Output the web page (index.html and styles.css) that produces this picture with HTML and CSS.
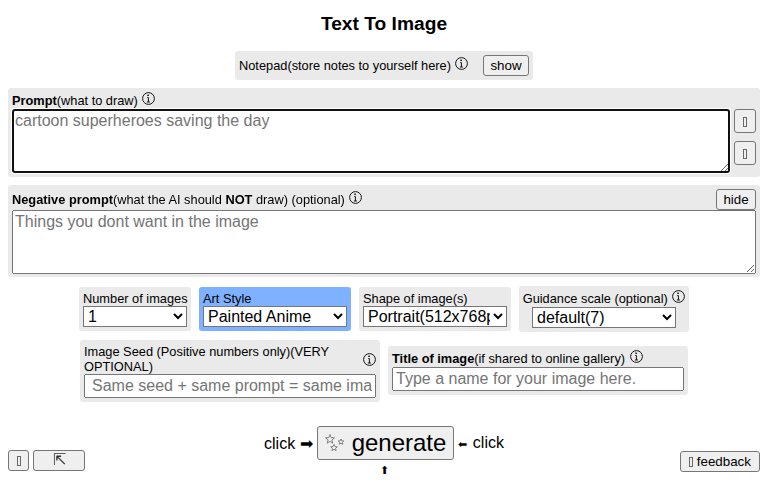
FILE: index.html
```html
<!DOCTYPE html>
<html>

<head>
  <title>Text To Image</title>
  <link rel="stylesheet" href="styles.css">
</head>

<body>
  <svg class="icon-defs" width="0" height="0">
    <symbol id="info" viewBox="0 0 13 13">
      <circle cx="6.5" cy="6.5" r="5.9" fill="none" stroke="#111" stroke-width="1" />
      <rect x="5.3" y="2.6" width="1.6" height="1.4" fill="#111" />
      <path d="M5 5.3h1.9v4.3h1v0.8h-3v-0.8h1v-3.5h-0.9z" fill="#111" />
    </symbol>
  </svg>

  <h1 class="title">Text To Image</h1>

  <div class="notepad-row">
    <div class="panel notepad">
      <span>Notepad(store notes to yourself here)</span>
      <svg class="info"><use href="#info" /></svg>
      <button class="btn show-btn">show</button>
    </div>
  </div>

  <div class="panel prompt">
    <div class="prompt-main">
      <label class="field-label with-info"><b>Prompt</b>(what to draw) <svg class="info"><use href="#info" /></svg></label>
      <textarea class="prompt-text" placeholder="cartoon superheroes saving the day" autofocus></textarea>
    </div>
    <div class="prompt-side">
      <button class="btn side-btn"><span class="tofu"></span></button>
      <button class="btn side-btn"><span class="tofu"></span></button>
    </div>
  </div>

  <div class="panel negative">
    <div class="negative-head">
      <label class="field-label with-info"><b>Negative prompt</b>(what the AI should <b>NOT</b> draw) (optional) <svg class="info"><use href="#info" /></svg></label>
      <button class="btn hide-btn">hide</button>
    </div>
    <textarea class="negative-text" placeholder="Things you dont want in the image"></textarea>
  </div>

  <div class="options">
    <div class="panel option option-count">
      <label class="field-label">Number of images</label>
      <select class="pick">
        <option>1</option>
      </select>
    </div>
    <div class="panel option option-style">
      <label class="field-label">Art Style</label>
      <select class="pick">
        <option>Painted Anime</option>
      </select>
    </div>
    <div class="panel option option-shape">
      <label class="field-label">Shape of image(s)</label>
      <select class="pick">
        <option>Portrait(512x768px)</option>
      </select>
    </div>
    <div class="panel option option-guidance">
      <label class="field-label with-info">Guidance scale (optional) <svg class="info"><use href="#info" /></svg></label>
      <select class="pick">
        <option>default(7)</option>
      </select>
    </div>
  </div>

  <div class="options options-second">
    <div class="panel seed">
      <div class="seed-head">
        <label class="field-label">Image Seed (Positive numbers only)(VERY OPTIONAL)</label>
        <svg class="info"><use href="#info" /></svg>
      </div>
      <input class="text-input seed-input" type="text" placeholder="Same seed + same prompt = same image">
    </div>
    <div class="panel image-title">
      <label class="field-label with-info"><b>Title of image</b>(if shared to online gallery) <svg class="info"><use href="#info" /></svg></label>
      <input class="text-input" type="text" placeholder="Type a name for your image here.">
    </div>
  </div>

  <div class="generate-row">
    <span>click ➡</span>
    <button class="btn generate-btn">
      <svg class="stars" width="20" height="20" viewBox="0 0 20 20" fill="none" stroke="#666" stroke-width="0.8">
        <polygon points="5,1.5 6.2,4.6 9.5,4.8 6.9,6.9 7.8,10.2 5,8.3 2.2,10.2 3.1,6.9 0.5,4.8 3.8,4.6" />
        <polygon points="16,6 16.8,7.8 18.8,8 17.3,9.3 17.8,11.3 16,10.2 14.2,11.3 14.7,9.3 13.2,8 15.2,7.8" />
        <polygon points="9,11.5 10,13.6 12.3,13.8 10.6,15.3 11.1,17.6 9,16.4 6.9,17.6 7.4,15.3 5.7,13.8 8,13.6" />
      </svg>
      generate
    </button>
    <span><span class="left-arrow">⬅</span> click</span>
  </div>
  <div class="up-arrow">⬆</div>

  <div class="corner corner-left">
    <button class="btn small-btn"><span class="tofu"></span></button>
    <button class="btn top-btn">⇱</button>
  </div>
  <button class="btn corner corner-right"><span class="tofu"></span> feedback</button>
</body>

</html>
```

FILE: styles.css
```css
body {
  margin: 8px;
  font-family: "Liberation Sans", Arial, sans-serif;
  font-size: 12.8px;
  color: black;
  background: white;
}

.icon-defs {
  display: none;
}

.title {
  margin: 5px 0 16px;
  font-size: 19.2px;
  line-height: 22px;
  text-align: center;
}

.panel {
  background: #eaeaea;
  border-radius: 3px;
  box-sizing: border-box;
}

.info {
  flex: none;
  width: 13px;
  height: 13px;
}

.field-label {
  display: block;
  line-height: 15px;
}

.with-info {
  height: 17px;
  line-height: 17px;
}

.with-info .info {
  margin-left: 1px;
  vertical-align: baseline;
}

.btn {
  font-family: "Liberation Sans", Arial, sans-serif;
  font-size: 13.33px;
  background: #efefef;
  border: 1px solid #767676;
  border-radius: 3px;
  color: black;
  padding: 1px 6px;
}

.tofu {
  display: inline-block;
  box-sizing: border-box;
  width: 4px;
  height: 10px;
  border: 1px solid #666;
  vertical-align: -1px;
}

.notepad-row {
  display: flex;
  justify-content: center;
  margin-bottom: 8px;
}

.notepad {
  display: flex;
  align-items: center;
  width: 298px;
  height: 29px;
  padding: 0 4px;
  gap: 4px;
  white-space: nowrap;
}

.notepad .info {
  margin-top: -4px;
}

.show-btn {
  width: 46px;
  height: 21px;
  margin-left: 11px;
}

.prompt {
  display: flex;
  height: 89px;
  padding: 4px;
  margin-bottom: 8px;
}

.prompt-main {
  flex: 1;
  min-width: 0;
}

.prompt-text,
.negative-text {
  display: block;
  box-sizing: border-box;
  width: 100%;
  height: 64px;
  margin: 0;
  padding: 2px;
  font-family: "Liberation Sans", Arial, sans-serif;
  font-size: 16px;
}

.prompt-side {
  display: flex;
  flex-direction: column;
  gap: 8px;
  width: 22px;
  margin-left: 4px;
  padding-top: 17px;
}

.side-btn {
  width: 22px;
  height: 24px;
  padding: 0;
}

.negative {
  height: 92px;
  padding: 4px;
  margin-bottom: 9px;
}

.negative-head {
  display: flex;
  justify-content: space-between;
  align-items: flex-start;
  height: 21px;
}

.negative-head .field-label {
  margin-top: 2px;
}

.hide-btn {
  width: 40px;
  height: 21px;
  padding: 0;
}

.options {
  display: flex;
  justify-content: center;
  align-items: center;
  gap: 8px;
  margin-bottom: 8px;
}

.option {
  display: flex;
  flex-direction: column;
  height: 44px;
  padding: 4px;
  white-space: nowrap;
}

.option-count {
  width: 112px;
}

.option-style {
  width: 152px;
  background: #7eb1ff;
}

.option-shape {
  width: 152px;
}

.option-guidance {
  width: 170px;
  height: 46px;
  align-items: center;
}

.pick {
  box-sizing: border-box;
  width: 100%;
  height: 21px;
  flex: none;
  font-family: "Liberation Sans", Arial, sans-serif;
  font-size: 16px;
  background: white;
}

.option-guidance .pick {
  width: 144px;
}

.options-second {
  align-items: flex-start;
  margin-bottom: 24px;
}

.seed {
  width: 300px;
  height: 62px;
  padding: 4px;
}

.seed-head {
  display: flex;
  align-items: center;
  gap: 2px;
  height: 30px;
}

.image-title {
  width: 300px;
  height: 49px;
  margin-top: 6px;
  padding: 4px;
}

.text-input {
  display: block;
  box-sizing: border-box;
  width: 100%;
  height: 24px;
  margin: 0;
  padding: 1px 2px;
  font-family: "Liberation Sans", Arial, sans-serif;
  font-size: 16px;
}

.seed-input {
  padding-left: 6px;
}

.generate-row {
  display: flex;
  justify-content: center;
  align-items: center;
  gap: 4px;
  font-size: 16px;
}

.generate-btn {
  display: flex;
  align-items: center;
  gap: 7px;
  font-size: 24px;
  height: 34px;
  padding: 0 7px;
}

.left-arrow {
  font-size: 11px;
  margin-right: 1px;
}

.up-arrow {
  text-align: center;
  font-size: 11px;
  line-height: 14px;
  margin-top: 3px;
}

.corner {
  position: fixed;
  bottom: 8px;
}

.corner-left {
  left: 8px;
  bottom: 9px;
  display: flex;
  gap: 4px;
}

.corner-right {
  right: 8px;
  width: 80px;
  height: 21px;
  padding: 0;
}

.small-btn {
  width: 21px;
  height: 21px;
  padding: 0;
}

.top-btn {
  width: 52px;
  height: 21px;
  padding: 0 0 1px;
  font-size: 16px;
  line-height: 16px;
  color: #333;
}
```
